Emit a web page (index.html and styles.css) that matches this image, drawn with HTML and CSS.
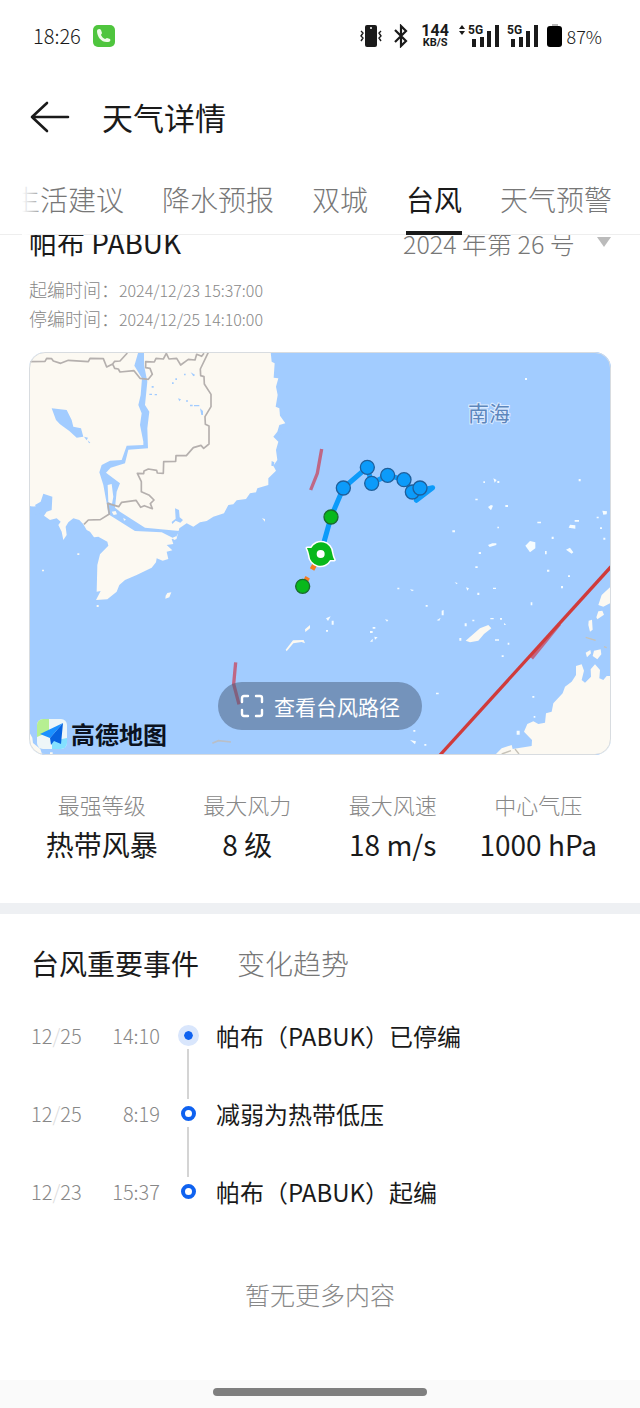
FILE: index.html
```html
<!DOCTYPE html>
<html lang="zh-CN">
<head>
  <meta charset="UTF-8">
  <meta name="viewport" content="width=device-width, initial-scale=1">
  <title>天气详情</title>
  <link rel="stylesheet" href="styles.css">
</head>
<body>
  <header class="header">
    <div class="status-bar">
      <span class="clock">18:26</span>
      <svg class="phone-icon" width="22" height="22" viewBox="0 0 22 22">
        <rect width="22" height="22" rx="5" fill="#4fc53e"/>
        <path d="M4 6c0-2 3-3 4-1l1 3c0 1-1 1-1 2 1 2 2 3 4 4 1 0 1-1 2-1l3 1c1 1 0 3-2 3C9 18 4 12 4 6z" fill="#effbe9"/>
      </svg>
      <div class="status-icons">
        <svg width="22" height="24" viewBox="0 0 22 24">
          <rect x="5" y="1" width="12" height="22" rx="2" fill="#1a1a1a"/>
          <circle cx="11" cy="4" r="1" fill="#fff"/>
          <path d="M1 7l2 2-2 3 2 2-2 3M21 7l-2 2 2 3-2 2 2 3" fill="none" stroke="#1a1a1a" stroke-width="1.4"/>
        </svg>
        <svg class="bluetooth" width="14" height="24" viewBox="0 0 14 24">
          <path d="M1 6l11 11-5 5V2l5 5L1 18" fill="none" stroke="#1a1a1a" stroke-width="2.2"/>
        </svg>
        <div class="net-speed"><b>144</b><span>KB/S</span></div>
        <svg width="42" height="24" viewBox="0 0 42 24" fill="#1a1a1a">
          <path d="M0 5l3-4 3 4zM0 7l3 4 3-4z"/>
          <text class="signal-text" x="9" y="10">5G</text>
          <path d="M13 15h4v8h-4zM21 13h4v10h-4zM28 7h4v16h-4zM36 1h4v22h-4z"/>
        </svg>
        <svg class="signal2" width="32" height="24" viewBox="0 0 32 24" fill="#1a1a1a">
          <text class="signal-text" x="0" y="10">5G</text>
          <path d="M4 15h4v8H4zM12 13h4v10h-4zM19 7h4v16h-4zM27 1h4v22h-4z"/>
        </svg>
        <svg class="battery" width="16" height="24" viewBox="0 0 16 24">
          <path d="M5 0h6v3H5z" fill="#bbb"/>
          <rect y="2" width="15" height="21" rx="3"/>
        </svg>
        <span class="percent">87%</span>
      </div>
    </div>

    <div class="title-bar">
      <button class="back" aria-label="返回">
        <svg width="40" height="32" viewBox="0 0 40 32">
          <path d="M38 16H2M17 2L2 16l15 14" fill="none" stroke="#1a1a1a" stroke-width="2.6" stroke-linecap="round" stroke-linejoin="round"/>
        </svg>
      </button>
      <h1>天气详情</h1>
    </div>

    <nav class="tabs">
      <button class="tab">生活建议</button>
      <button class="tab">降水预报</button>
      <button class="tab">双城</button>
      <button class="tab active">台风</button>
      <button class="tab">天气预警</button>
    </nav>
  </header>

  <main>
    <section class="storm">
      <div class="storm-head">
        <h2>帕布 PABUK</h2>
        <div class="picker">
          <select aria-label="台风编号"><option>2024 年第 26 号</option></select>
        </div>
      </div>
      <p class="meta">起编时间：<time>2024/12/23 15:37:00</time></p>
      <p class="meta">停编时间：<time>2024/12/25 14:10:00</time></p>

      <div class="map">
        <svg class="map-canvas" viewBox="27 21 1746 1209">
          <rect x="27" y="21" width="1746" height="1209" fill="#a2ccff"/>
          <!-- mainland -->
          <path fill="#fcf9f2" d="M27 21H752L755 50 764 55 761 98 775 100 768 125 773 150 767 185 778 190 780 212 796 235 778 240 772 260 760 275 775 290 768 315 772 345 760 362 768 377 745 400 745 420 712 430 708 442 690 445 678 462 650 466 640 478 625 480 612 505 580 515 560 528 540 532 520 545 500 535 478 550 470 580 455 582 460 597 440 600 457 616 440 620 445 642 428 647 410 640 408 652 395 668 350 690 315 705 298 720 290 740 262 763 228 765 242 738 230 740 232 660 240 628 265 602 262 590 235 575 222 577 210 560 200 555 190 538 178 525 160 520 145 532 137 545 140 570 130 585 125 560 115 540 122 530 110 520 90 525 72 512 80 500 95 495 97 455 70 446 62 470 45 480 50 488 27 482Z"/>
          <g fill="#a2ccff">
            <path d="M355 21L343 62 366 100 362 150 355 180 365 205 360 240 370 290V300L320 302 305 345 270 347 245 360 238 382 250 420 260 475 265 508 345 558 425 562 465 582 478 558 375 548 300 500 285 488 290 440 300 415 258 383 272 368 315 355 325 314 384 310 382 250 388 200 375 180 382 110 372 60V21Z"/>
            <path d="M95 190L140 195 155 225 160 245 183 250 190 275 170 278 148 258 120 238 108 225ZM35 485L60 482 68 500 45 510ZM192 275l12 3-4 8zM203 286l8 7-4 2z"/>
            <path d="M465 490l12 5 2 22 10 8-8 8-14-6-10 10-2-6 12-10zM512 82l14 8-6 4zM474 160l9 3-5 6zM510 179h8v5h-8zM522 180h16v4h-16zM540 190l9 8v12h-5zM395 123h6v5h-6zM388 146h8v4h-8zM404 147h7v4h-7zM466 100h5v5h-5zM492 86h5v5h-5zM456 112h5v5h-5zM498 166h6v4h-6zM755 348l8 4-2 12-7-2zM774 258l10-3 3 10-10 4z"/>
          </g>
          <path fill="#fcf9f2" d="M263 420l12-3 5 38-4 22-11-6zM275 500l12-2 4 10-10 2zM310 518l8 6-6 3zM458 578l10-4 2 8-8 3zM726 520l9 2 0 8z"/>
          <g fill="none" stroke="#b5b0ae" stroke-width="5" stroke-linejoin="round">
            <path d="M27 50L75 49 80 40 95 41 100 48 122 55 145 46 205 50 210 40 250 41 260 66 278 57 284 49 300 48 322 24M278 57L284 70 295 72 300 81 342 77 360 100 385 103 397 88 390 70 377 68 377 50 403 51 408 40 430 42 439 25 447 42 470 40 482 60 505 43 525 45 530 28 545 34 552 25M565 22L541 72 542 92 552 95 553 117 573 148V185L555 215 556 238 567 243V297L551 310 543 301 520 308 499 332H468L467 349 431 350 430 385 412 384 410 376 385 372 372 378 371 386 352 385 364 410V440L388 451 402 465 391 476 397 491 373 482 362 487 348 466 305 472 296 485 263 475 268 507 241 524 205 525 192 538"/>
          </g>
          <!-- islands -->
          <path fill="#fcf9f2" d="M27 1160l10 18 2 16 22 18 6 18H27zM90 1222h8v8h-8zM437 752l5-8 12-2-6 15-12 4zM855 853l15-13v10l-14 11zM797 914l22-28 32-1 4 10-10-4-25 4-20 24zM172 625h6v5h-6zM66 674h6v5h-6zM230 780h6v6h-6zM286 624h8v4h-8z"/>
          <g transform="translate(900 615)">
            <path fill="#fcf9f2" d="M873 612H528L545 595 575 585 578 597 635 588 636 570 612 545 622 522 640 514 655 522 675 518 678 490 695 485 700 460 728 430 735 410 755 395 768 375 768 348 785 343 792 362 785 390 795 398 813 380 812 358 825 343 840 360 838 385 850 390 860 378 873 378ZM870 112L845 135 835 165 850 170 873 158V112zM835 184l12-2 5 12-20 14-3-6zM806 212l10-3 2 30-8 6-5-20zM797 308l14-8 2 10-12 12zM822 302l20-4 2 15-12 15-14-10zM437 272L480 235 505 225 514 235 492 252 475 272 450 277z"/>
            <path fill="#f6fcff" d="M18 205l14-6-8 14zM35 212h6v12h-6zM18 240h6v5h-6zM150 275l8-9v9zM163 260l10 2-8 7zM150 243h8v6h-8zM158 231h8v5h-8zM195 208l10 2-4 5zM232 113h6v5h-6zM270 118l12 2-6 4zM317 165h6v5h-6zM350 211l12-8-4 9zM365 182l6-2v16h-6zM434 220h6v9h-6zM457 209h6v5h-6zM418 264h6v8h-6zM438 112l9 3-5 7zM404 97l9 2-3 4zM472 128h6v7h-6zM519 113h9v4h-9zM632 157h5v9h-5zM681 59h7v6h-7zM723 108h6v7h-6zM744 76h6v5h-6zM511 204h10v4h-10zM540 204h6v5h-6zM553 218l5 7h-6zM525 268h12v4h-12zM563 278h5v6h-5zM545 316h6v5h-6zM348 428h8v5h-8zM637 438h6v5h-6zM590 542h9v12h-9zM270 570l18 4-3 9zM313 582h6v5h-6zM280 540h6v5h-6zM466 49h7v5h-7zM477 7h6v5h-6zM641 498h5v5h-5z"/>
            <path fill="none" stroke="#c6c2b8" stroke-width="4" d="M797 262l30 9M852 290l8 3M545 612l28-10M585 597l12 15"/>
          </g>
          <path fill="none" stroke="#b9bfc8" stroke-width="5" d="M577 1195l18-8 38 4"/>
          <path fill="#f6fcff" d="M1515 99h6v6h-6zM1420 400l10 5-6 8zM1432 408h6v6h-6zM1390 409h5v5h-5zM1366 461h7v5h-7zM1404 486l9-6 6 2-6 14zM1456 480h8v6h-8zM1676 402h6v7h-6zM1747 497l14 2-1 9-10 1zM1730 515h6v5h-6zM1646 548l4-9 16 2 0 10zM1664 525h13v5h-13zM1740 547h6v5h-6zM1552 530h11v5h-11zM1432 545h5v5h-5zM1297 556h8v6h-8zM1595 575h6v7h-6zM1404 600l13-5 12 0v5l-20 6zM1516 602l14-14 16 4 0 18-16 12zM1575 618h5v10h-5zM1638 614l12-6 10 14-5 4zM1750 578h6v6h-6zM1376 622h7v5h-7z"/>
          <!-- boundary marks -->
          <g fill="none" stroke="#c8465c" stroke-opacity=".75" stroke-width="10">
            <path d="M905 312L892 385 872 435"/>
            <path d="M647 952L641 1017 657 1078"/>
            <path d="M1619 837L1535 940"/>
          </g>
          <path d="M1773 665L1260 1230" stroke="#d03b3b" stroke-width="10"/>
          <text class="sea-label" x="1344" y="228">南海</text>
          <!-- storm track -->
          <path d="M902 627L848 724" stroke="#f57c23" stroke-width="15" stroke-dasharray="15 27" stroke-dashoffset="-38"/>
          <path d="M902 627L933 516 970 429 1042 367 1055 415 1103 391 1152 404 1177 441 1238 428 1189 466" fill="none" stroke="#0c9bfa" stroke-width="15" stroke-linecap="round" stroke-linejoin="round"/>
          <path d="M1185 440L1238 428 1189 466z" fill="#0c9bfa"/>
          <g fill="#0c9bfa" stroke="#1f5f9b" stroke-width="4">
            <circle cx="1042" cy="367" r="21"/>
            <circle cx="970" cy="429" r="21"/>
            <circle cx="1055" cy="415" r="21"/>
            <circle cx="1103" cy="391" r="21"/>
            <circle cx="1152" cy="404" r="21"/>
            <circle cx="1177" cy="441" r="21"/>
            <circle cx="1200" cy="429" r="21"/>
          </g>
          <g fill="#08b81c" stroke="#1b6b2e" stroke-width="4">
            <circle cx="933" cy="516" r="21"/>
            <circle cx="848" cy="724" r="21"/>
          </g>
          <g transform="translate(902 627)">
            <path d="M-41-18L-28-18A33 33 0 0 1 34-4Q36 8 41 18L28 18A33 33 0 0 1-34 4Q-36-8-41-18Z" fill="#08b81c" stroke="#fff" stroke-width="9" stroke-linejoin="round" paint-order="stroke"/>
            <circle r="12" fill="#fff"/>
          </g>
        </svg>
        <div class="map-brand">
          <svg width="30" height="30" viewBox="0 0 30 30">
            <rect width="30" height="30" rx="6" fill="#eef6f8"/>
            <path d="M6 0h6v13L0 18V6a6 6 0 0 1 6-6z" fill="#b6ef92"/>
            <path d="M15 22l15-3v5a6 6 0 0 1-6 6h-9z" fill="#84e0ff"/>
            <path d="M26 4L3 15l10 4z" fill="#1b91ff"/>
            <path d="M26 4L13 19l1 7 3-4 7 3z" fill="#0763e0"/>
          </svg>
          <span>高德地图</span>
        </div>
        <button class="path-btn">
          <svg width="24" height="24" viewBox="0 0 24 24">
            <path d="M2 8V4q0-2 2-2h4M16 2h4q2 0 2 2v4M22 16v4q0 2-2 2h-4M8 22H4q-2 0-2-2v-4" fill="none" stroke="#fff" stroke-width="2.4" stroke-linecap="round"/>
          </svg>
          查看台风路径
        </button>
      </div>

      <dl class="stats">
        <div><dt>最强等级</dt><dd>热带风暴</dd></div>
        <div><dt>最大风力</dt><dd>8 级</dd></div>
        <div><dt>最大风速</dt><dd>18 m/s</dd></div>
        <div><dt>中心气压</dt><dd>1000 hPa</dd></div>
      </dl>
    </section>

    <section class="events">
      <div class="event-tabs">
        <button class="event-tab active">台风重要事件</button>
        <button class="event-tab">变化趋势</button>
      </div>
      <ol class="timeline">
        <li class="latest"><span class="date">12<i>/</i>25</span><span class="time">14:10</span><span class="dot"></span><span>帕布（PABUK）已停编</span></li>
        <li><span class="date">12<i>/</i>25</span><span class="time">8:19</span><span class="dot"></span><span>减弱为热带低压</span></li>
        <li><span class="date">12<i>/</i>23</span><span class="time">15:37</span><span class="dot"></span><span>帕布（PABUK）起编</span></li>
      </ol>
      <p class="no-more">暂无更多内容</p>
    </section>
  </main>

  <footer class="gesture-bar"><span class="handle"></span></footer>
</body>
</html>
```
FILE: styles.css
```css
* {
  box-sizing: border-box;
}
body {
  margin: 0;
  min-height: 100vh;
  display: flex;
  flex-direction: column;
  background-color: #fff;
  color: #1a1a1a;
  font-family: "Noto Sans CJK SC", sans-serif;
  font-weight: 300;
}
h1, h2, p, dl, dd, ol {
  margin: 0;
  padding: 0;
}
h1, h2, dd {
  font-weight: 400;
}
button, select {
  border: none;
  background: none;
  padding: 0;
  font: inherit;
  color: inherit;
  cursor: pointer;
}
svg {
  display: block;
  flex-shrink: 0;
}

/* Header */
.header {
  position: sticky;
  top: 0;
  z-index: 2;
  background-color: #fff;
}
.header::after {
  content: "";
  display: block;
  height: 1px;
  margin-top: -1px;
  background-color: #eee;
}
.status-bar {
  display: flex;
  align-items: center;
  height: 72px;
  padding: 0 38px 0 33px;
}
.clock {
  width: 60px;
  font-size: 20px;
  line-height: 24px;
}
.status-icons {
  display: flex;
  align-items: center;
  margin-left: auto;
}
.bluetooth {
  margin: 0 14px 0 12px;
}
.net-speed {
  display: flex;
  flex-direction: column;
  align-items: center;
  width: 27px;
  margin-right: 10px;
  font-family: Roboto, sans-serif;
  font-size: 16px;
  line-height: 14px;
}
.net-speed b {
  font-weight: 700;
}
.net-speed span {
  font-size: 11px;
  font-weight: 700;
  line-height: 10px;
}
.signal-text {
  font-family: Roboto, sans-serif;
  font-size: 12px;
  font-weight: bold;
}
.signal2 {
  margin: 0 8px 0 6px;
}
.percent {
  margin-left: 4px;
  font-size: 18px;
  line-height: 24px;
}
.title-bar {
  display: flex;
  align-items: center;
  gap: 32px;
  height: 90px;
  padding: 0 30px;
}
.title-bar h1 {
  font-size: 31px;
  line-height: 40px;
}
.tabs {
  position: relative;
  display: flex;
  gap: 38px;
  margin-left: 22px;
  overflow: hidden;
}
.tabs::before {
  content: "";
  position: absolute;
  left: 0;
  top: 0;
  width: 18px;
  height: 100%;
  background: linear-gradient(to right, #fff, rgba(255, 255, 255, 0.3));
}
.tab {
  flex-shrink: 0;
  height: 73px;
  padding-top: 4px;
  border-bottom: 4px solid transparent;
  font-size: 28px;
  color: #777;
}
.tab:first-child {
  margin-left: -10px;
}
.tab.active {
  color: #1a1a1a;
  border-color: #1a1a1a;
  font-weight: 400;
}

/* Storm card */
.storm {
  margin-top: -10px;
  padding: 0 29px 39px;
  border-bottom: 11px solid #eef0f3;
}
.storm-head {
  display: flex;
  justify-content: space-between;
  align-items: center;
  margin-bottom: 16px;
}
.storm-head h2 {
  font-size: 28px;
  line-height: 34px;
}
.picker {
  display: flex;
  align-items: center;
  gap: 22px;
  color: #777;
}
.picker select {
  appearance: none;
  height: 34px;
  font-size: 25px;
}
.picker::after {
  content: "";
  border: 7px solid transparent;
  border-top: 10px solid #bbb;
  border-bottom: none;
}
.meta {
  font-size: 18px;
  line-height: 29px;
  color: #888;
}
.meta time {
  font-size: 16px;
  line-height: 16px;
}
.map {
  position: relative;
  margin-top: 19px;
  border-radius: 16px;
  overflow: hidden;
}
.map::after {
  content: "";
  position: absolute;
  inset: 0;
  border: 1px solid #d8dce0;
  border-radius: 16px;
  pointer-events: none;
}
.map-canvas {
  width: 100%;
  height: auto;
}
.sea-label {
  font-size: 63px;
  font-weight: 400;
  fill: #5c86bd;
  stroke: #dcebff;
  stroke-width: 6px;
  paint-order: stroke;
}
.map-brand {
  position: absolute;
  left: 8px;
  bottom: 6px;
  display: flex;
  align-items: center;
  gap: 4px;
  font-size: 24px;
  font-weight: bold;
  line-height: 30px;
  color: #0b1220;
}
.path-btn {
  position: absolute;
  left: 50%;
  bottom: 25px;
  transform: translateX(-50%);
  display: flex;
  align-items: center;
  gap: 10px;
  height: 48px;
  padding: 0 22px;
  border-radius: 24px;
  background-color: rgba(70, 90, 120, 0.5);
  color: #fff;
  font-size: 21px;
  font-weight: 400;
  white-space: nowrap;
}
.stats {
  display: grid;
  grid-template-columns: repeat(4, 1fr);
  margin-top: 34px;
  text-align: center;
}
.stats dt {
  font-size: 22px;
  line-height: 30px;
  color: #888;
}
.stats dd {
  margin-top: 5px;
  font-size: 28px;
  line-height: 40px;
}

/* Events */
.events {
  padding: 29px 31px;
}
.event-tabs {
  display: flex;
  gap: 38px;
}
.event-tab {
  font-size: 28px;
  line-height: 40px;
  color: #777;
}
.event-tab.active {
  color: #1a1a1a;
  font-weight: 400;
}
.timeline {
  margin-top: 13px;
  list-style: none;
}
.timeline li {
  position: relative;
  display: grid;
  grid-template-columns: 69px 60px 56px 1fr;
  align-items: center;
  height: 78px;
  font-size: 24px;
  font-weight: 400;
}
.date, .time {
  font-size: 20px;
  font-weight: 300;
  color: #888;
}
.date i {
  font-style: normal;
  color: #ddd;
}
.time {
  text-align: right;
}
.dot {
  justify-self: center;
  width: 15px;
  height: 15px;
  border: 4px solid #0f62f0;
  border-radius: 50%;
}
.latest .dot {
  width: 21px;
  height: 21px;
  border: 6px solid #d9e6fc;
  background-color: #0f62f0;
  background-clip: padding-box;
}
.timeline li:not(:last-child)::after {
  content: "";
  position: absolute;
  left: 156px;
  top: 53px;
  width: 2px;
  height: 50px;
  background-color: #d4d4d4;
}
.no-more {
  margin-top: 44px;
  font-size: 25px;
  line-height: 40px;
  text-align: center;
  color: #888;
}

/* Bottom gesture area */
.gesture-bar {
  display: flex;
  justify-content: center;
  height: 28px;
  margin-top: auto;
  padding-top: 8px;
  background-color: #fafafa;
}
.handle {
  width: 214px;
  height: 8px;
  border-radius: 4px;
  background-color: #7f7f7f;
}
```
